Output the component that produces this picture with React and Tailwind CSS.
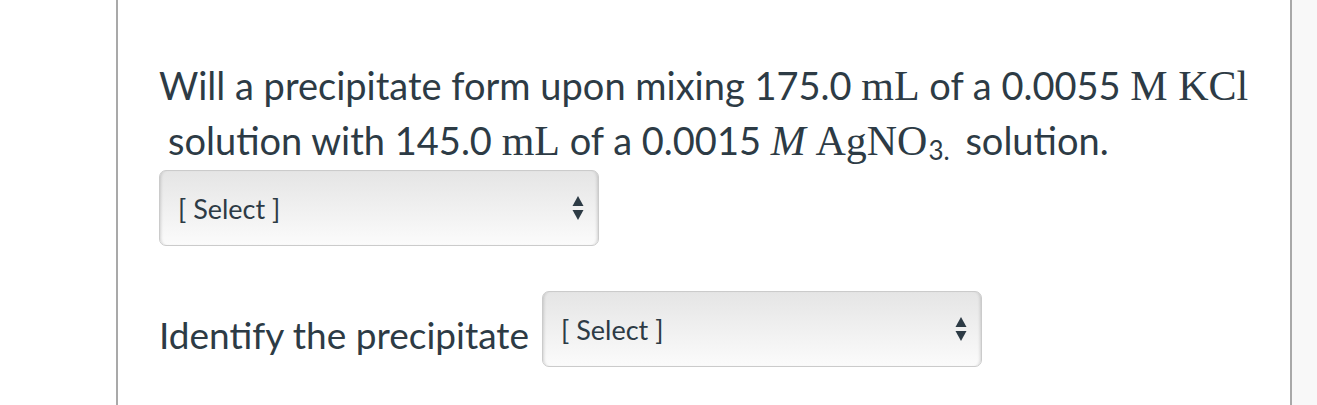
import React from 'react';

const sans = { fontFamily: 'Lato, "Open Sans", sans-serif' };

function M({ children, italic }) {
  return (
    <span
      className={`text-[42px] leading-none ${italic ? 'italic' : ''}`}
      style={{ fontFamily: '"Liberation Serif", "DejaVu Serif", serif' }}
    >
      {children}
    </span>
  );
}

function Arrows() {
  return (
    <svg width="12" height="24" viewBox="0 0 12 24" className="shrink-0">
      <path d="M6 0 L11.5 10 L0.5 10 Z" fill="#2d3b45" />
      <path d="M0.5 14 L11.5 14 L6 24 Z" fill="#2d3b45" />
    </svg>
  );
}

function SelectBox({ className = '' }) {
  return (
    <div
      className={`flex h-[76px] w-[440px] shrink-0 items-center justify-between rounded-[7px] border border-[#cbcbcb] bg-linear-to-b from-[#e5e5e5] to-[#fbfbfb] pl-[18px] pr-[14px] shadow-[inset_3px_0_3px_-2px_rgba(0,0,0,0.15),inset_-3px_0_3px_-2px_rgba(0,0,0,0.15)] ${className}`}
    >
      <span className="text-[27px] leading-none text-[#2d3b45]" style={sans}>[ Select ]</span>
      <Arrows />
    </div>
  );
}

export default function App() {
  return (
    <div className="flex h-[405px] w-[1317px] overflow-hidden bg-white" style={sans}>
      <div className="w-[116px] shrink-0" />
      <div className="w-[1176px] shrink-0 border-x-2 border-[#a9a9a9] pl-[41px] pt-[58px] text-[#2d3b45]">
        <div className="text-[38px]">
          <p className="leading-[55px] whitespace-nowrap">
            Will a precipitate form upon mixing 175.0 <M>mL</M> of a 0.0055 <M>M KCl</M>
          </p>
          <p className="pl-[9px] leading-[55px] whitespace-nowrap">
            solution with 145.0 <M>mL</M> of a 0.0015 <M italic>M</M> <M>AgNO</M>
            <span className="relative top-[5px] ml-[1px] mr-[6px] text-[26px] leading-none">3.</span> solution.
          </p>
        </div>
        <SelectBox className="mt-[2px]" />
        <div className="mt-[45px] flex items-start gap-[13px] text-[37px]">
          <span className="mt-[22px] leading-[44px] whitespace-nowrap">Identify the precipitate</span>
          <SelectBox />
        </div>
      </div>
      <div className="flex-1 bg-[#f8f8f8]" />
    </div>
  );
}
